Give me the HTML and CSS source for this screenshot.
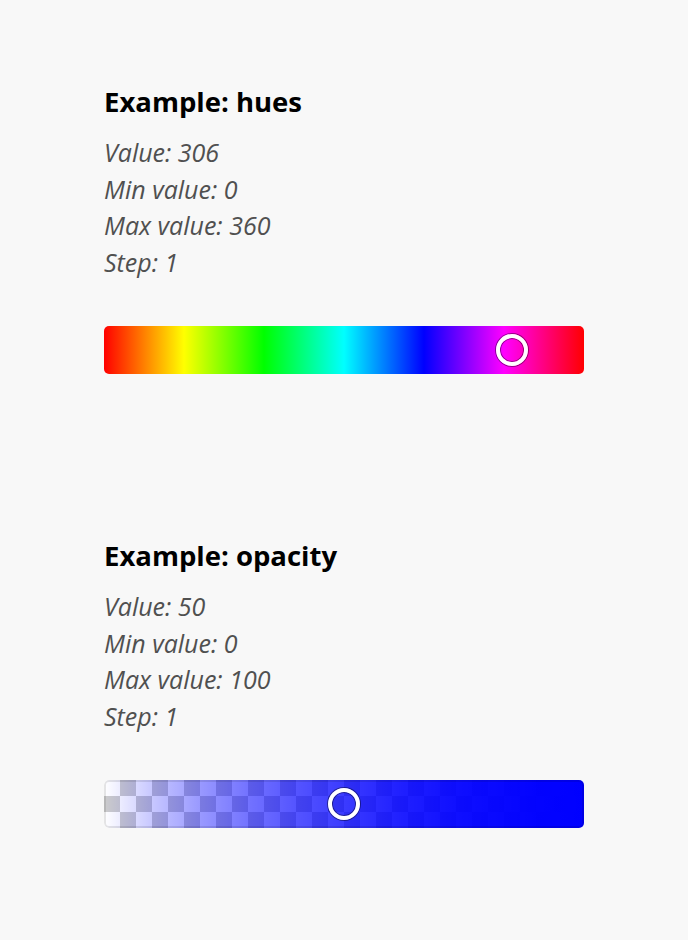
FILE: index.html
```html
<!DOCTYPE html>
<html lang="en">
  <head>
    <meta charset="UTF-8" />
    <meta name="viewport" content="width=device-width, initial-scale=1.0" />
    <title>Color slider examples</title>
    <link rel="stylesheet" href="styles.css">
  </head>
  <body>
    <div class="page">
      <section class="example">
        <h2>Example: hues</h2>
        <div class="info">
          <p>Value: 306</p>
          <p>Min value: 0</p>
          <p>Max value: 360</p>
          <p>Step: 1</p>
        </div>
        <div class="slider hue">
          <span class="thumb" style="left: 85%"></span>
        </div>
      </section>

      <section class="example">
        <h2>Example: opacity</h2>
        <div class="info">
          <p>Value: 50</p>
          <p>Min value: 0</p>
          <p>Max value: 100</p>
          <p>Step: 1</p>
        </div>
        <div class="slider opacity">
          <span class="thumb" style="left: 50%"></span>
        </div>
      </section>
    </div>
  </body>
</html>
```

FILE: styles.css
```css
body {
  margin: 0;
  background: #f8f8f8;
  font-family: "Open Sans", Arial, sans-serif;
  color: #000;
}

.page {
  display: flex;
  flex-direction: column;
  gap: 162px;
  padding: 82px 104px;
  width: 480px;
}

.example h2 {
  margin: 0;
  font-size: 27.5px;
  font-weight: 700;
  line-height: 40px;
}

.info {
  margin-top: 12px;
}

.info p {
  margin: 0;
  font-size: 25px;
  font-style: italic;
  line-height: 36.5px;
  color: #505050;
}

.slider {
  position: relative;
  margin-top: 46px;
  height: 48px;
  border-radius: 5px;
}

.slider.hue {
  background: linear-gradient(to right, #f00, #ff0, #0f0, #0ff, #00f, #f0f, #f00);
}

.slider.opacity {
  background:
    linear-gradient(to right,
      rgba(0, 0, 255, 0) 0%,
      rgba(0, 0, 255, 0.22) 10%,
      rgba(0, 0, 255, 0.4) 20%,
      rgba(0, 0, 255, 0.55) 30%,
      rgba(0, 0, 255, 0.67) 40%,
      rgba(0, 0, 255, 0.77) 50%,
      rgba(0, 0, 255, 0.88) 62%,
      rgba(0, 0, 255, 0.95) 75%,
      rgba(0, 0, 255, 0.99) 90%,
      #00f 100%),
    conic-gradient(#cccccc 25%, #fff 0 50%, #cccccc 0 75%, #fff 0) 0 0 / 32px 32px;
  box-shadow: inset 0 0 0 2px rgba(0, 0, 0, 0.1);
}

.thumb {
  position: absolute;
  top: 50%;
  width: 24px;
  height: 24px;
  border: 4px solid #fff;
  border-radius: 50%;
  transform: translate(-50%, -50%);
  box-shadow: 0 0 0 1px rgba(0, 0, 0, 0.42), inset 0 0 0 1px rgba(0, 0, 0, 0.42);
}
```
